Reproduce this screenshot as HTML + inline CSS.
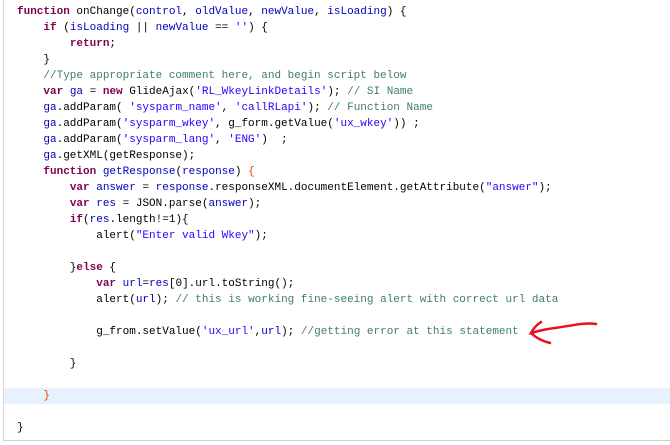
<!DOCTYPE html>
<html><head><meta charset="utf-8"><style>
html,body{margin:0;padding:0;background:#fff;width:670px;height:445px;overflow:hidden;position:relative}
#box{position:absolute;left:3px;top:0;width:667px;height:440px;border-left:1px solid #d8d8d8;border-bottom:1px solid #d0d0d0}
pre{margin:0;position:absolute;left:17px;top:4px;font-family:"Liberation Mono",monospace;font-size:11px;line-height:16px;color:#000}
.k{color:#7f0055;font-weight:bold}.v{color:#0000c0}.s{color:#2a00ff}.c{color:#3f7f5f}.o{color:#f04000}
#hl{position:absolute;left:4px;top:388px;width:666px;height:16px;background:#e8f2fe}
</style></head><body>
<div id="box"></div><div id="hl"></div>
<pre><span class="k">function</span> onChange(<span class="v">control</span>, <span class="v">oldValue</span>, <span class="v">newValue</span>, <span class="v">isLoading</span>) {
    <span class="k">if</span> (<span class="v">isLoading</span> || <span class="v">newValue</span> == <span class="s">''</span>) {
        <span class="k">return</span>;
    }
    <span class="c">//Type appropriate comment here, and begin script below</span>
    <span class="k">var</span> <span class="v">ga</span> = <span class="k">new</span> GlideAjax(<span class="s">'RL_WkeyLinkDetails'</span>); <span class="c">// SI Name</span>
    <span class="v">ga</span>.addParam( <span class="s">'sysparm_name'</span>, <span class="s">'callRLapi'</span>); <span class="c">// Function Name</span>
    <span class="v">ga</span>.addParam(<span class="s">'sysparm_wkey'</span>, g_form.getValue(<span class="s">'ux_wkey'</span>)) ;
    <span class="v">ga</span>.addParam(<span class="s">'sysparm_lang'</span>, <span class="s">'ENG'</span>)  ;
    <span class="v">ga</span>.getXML(getResponse);
    <span class="k">function</span> <span class="v">getResponse</span>(<span class="v">response</span>) <span class="o">{</span>
        <span class="k">var</span> <span class="v">answer</span> = <span class="v">response</span>.responseXML.documentElement.getAttribute(<span class="s">"answer"</span>);
        <span class="k">var</span> <span class="v">res</span> = JSON.parse(<span class="v">answer</span>);
        <span class="k">if</span>(<span class="v">res</span>.length!=1){
            alert(<span class="s">"Enter valid Wkey"</span>);

        }<span class="k">else</span> {
            <span class="k">var</span> <span class="v">url</span>=<span class="v">res</span>[0].url.toString();
            alert(<span class="v">url</span>); <span class="c">// this is working fine-seeing alert with correct url data</span>

            g_from.setValue(<span class="s">'ux_url'</span>,<span class="v">url</span>); <span class="c">//getting error at this statement</span>

        }

    <span class="o">}</span>

}</pre>
<svg style="position:absolute;left:0;top:0" width="670" height="445"><path d="M596 324 C585 322 570 326 555 328 C545 329 538 331 531 333 C534 327 538 324 541 322 M531 333 C536 338 542 341 550 343" fill="none" stroke="#e8101a" stroke-width="2.5" stroke-linecap="round"/></svg>
</body></html>
